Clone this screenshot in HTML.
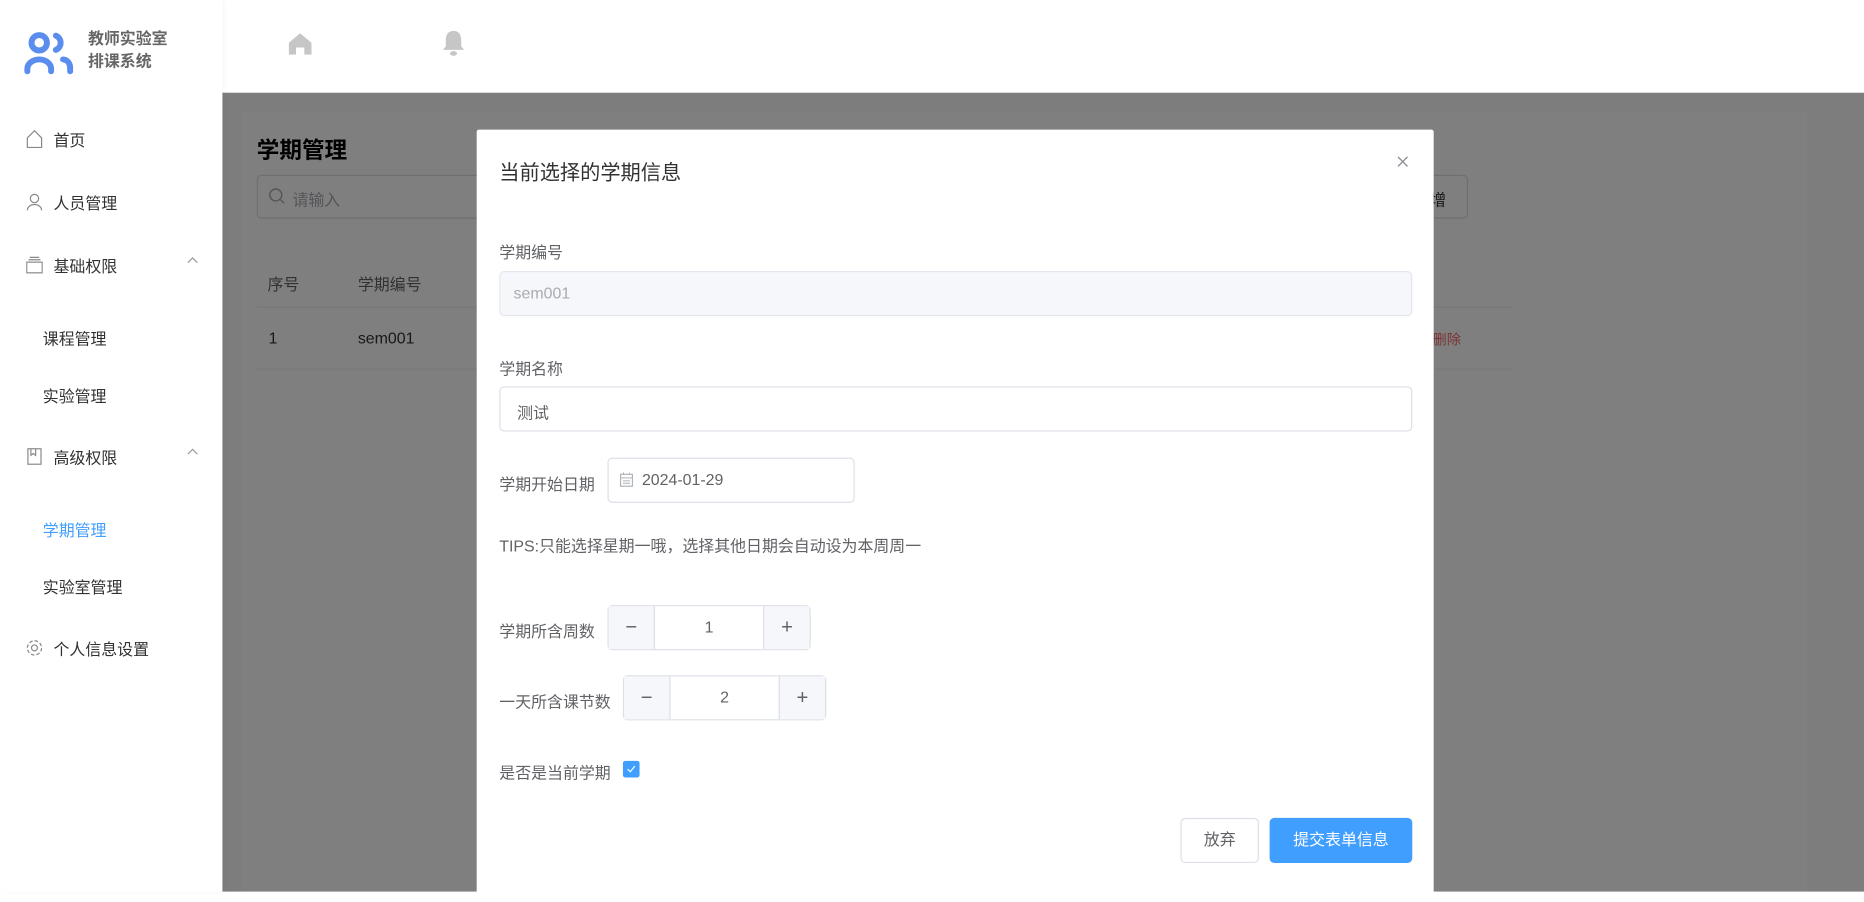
<!DOCTYPE html>
<html><head><meta charset="utf-8"><style>
html,body{margin:0;padding:0;width:1864px;height:891px;overflow:hidden;background:#fff}
#s{position:absolute;left:0;top:0;width:1568px;height:750px;transform:scale(1.18878);transform-origin:0 0;font-family:"Liberation Sans","Noto Sans CJK SC",sans-serif;font-size:13.4px;color:#303133}
.a{position:absolute}
.side{left:0;top:0;width:187px;height:750px;background:#fff;box-shadow:2px 0 6px rgba(0,0,0,.04)}
.mi{position:absolute;left:22px;font-size:13.4px;color:#303133;display:flex;align-items:center}
.mi svg{margin-right:9px}
.sub{position:absolute;left:36px;font-size:13.4px;color:#303133}
.inp{position:absolute;border:1px solid #dcdfe6;border-radius:4px;box-sizing:border-box;background:#fff}
.lbl{position:absolute;left:420px;font-size:13.4px;color:#606266}
.num{position:absolute;height:38px;width:171px;border:1px solid #dcdfe6;border-radius:4px;box-sizing:border-box;background:#fff}
.num .b{position:absolute;top:0;width:38px;height:36px;background:#f5f7fa;color:#606266;text-align:center;line-height:36px;font-size:17px;font-weight:300}
.num .v{position:absolute;left:38px;right:38px;top:0;height:36px;line-height:36px;text-align:center;color:#606266}
</style></head><body><div id="s">
<div class="a" style="left:187px;top:0;width:1381px;height:78px;background:#fff"></div>
<svg class="a" style="left:242px;top:27px" width="21" height="20" viewBox="0 0 21 20"><path d="M10.5 1 L20 9 L20 19 L14 19 L14 13 L7 13 L7 19 L1 19 L1 9 Z" fill="#c6c6c6"/></svg>
<svg class="a" style="left:371px;top:25px" width="21" height="23" viewBox="0 0 21 23"><path d="M10.5 1 C5.5 1 4 5 4 9 L4 14 L1.5 17 L19.5 17 L17 14 L17 9 C17 5 15.5 1 10.5 1Z" fill="#c6c6c6"/><ellipse cx="10.5" cy="20" rx="3" ry="2" fill="#c6c6c6"/></svg>
<div class="a" style="left:187px;top:78px;width:1381px;height:672px;background:#fbfbfb"></div>
<div class="a" style="left:203px;top:94px;width:1317px;height:656px;background:#fff"></div>
<div class="a" style="left:216px;top:112px;font-size:19px;font-weight:bold;color:#000">学期管理</div>
<div class="inp" style="left:216px;top:147px;width:300px;height:37px;"></div>
<svg class="a" style="left:226px;top:158px" width="14" height="14" viewBox="0 0 14 14"><circle cx="6" cy="6" r="5" fill="none" stroke="#a8abb2" stroke-width="1.2"/><path d="M10 10L13 13" stroke="#a8abb2" stroke-width="1.2"/></svg>
<div class="a" style="left:246px;top:157px;color:#a8abb2">请输入</div>
<div class="inp" style="left:1180px;top:147px;width:55px;height:37px"></div>
<div class="a" style="left:1203px;top:157px">增</div>
<div class="a" style="left:225px;top:228px;color:#606266">序号</div>
<div class="a" style="left:301px;top:228px;color:#606266">学期编号</div>
<div class="a" style="left:216px;top:258px;width:1056px;height:1px;background:#ebeef5"></div>
<div class="a" style="left:226px;top:277px">1</div>
<div class="a" style="left:301px;top:277px">sem001</div>
<div class="a" style="left:1205px;top:277px;color:#f56c6c;font-size:12px">删除</div>
<div class="a" style="left:216px;top:310px;width:1056px;height:1px;background:#ebeef5"></div>
<div class="a" style="left:187px;top:78px;width:1381px;height:672px;background:rgba(0,0,0,.5)"></div>
<div class="a side"></div>
<svg class="a" style="left:20px;top:26px" width="44" height="38" viewBox="0 0 44 38"><g fill="none" stroke="#5b8def" stroke-width="5" stroke-linecap="round"><circle cx="13" cy="10" r="6.5"/><path d="M27 4 A6.5 6.5 0 0 1 27 16"/><path d="M3 34 V32 A10 8 0 0 1 23 32 V34"/><path d="M33 24 A6 7 0 0 1 39 31 V34"/></g></svg>
<div class="a" style="left:74px;top:23px;font-size:13.4px;font-weight:bold;color:#666;line-height:19px">教师实验室<br>排课系统</div>
<div class="mi" style="top:107px"><svg width="14" height="16" viewBox="0 0 14 16"><path d="M1 7 L7 1 L13 7 L13 15 L1 15 Z" fill="none" stroke="#888" stroke-width="1"/></svg>首页</div>
<div class="mi" style="top:160px"><svg width="14" height="16" viewBox="0 0 14 16"><circle cx="7" cy="5" r="3.5" fill="none" stroke="#888"/><path d="M1 15 A6 5 0 0 1 13 15" fill="none" stroke="#888"/></svg>人员管理</div>
<div class="mi" style="top:213px"><svg width="14" height="16" viewBox="0 0 14 16"><rect x="0.5" y="5.5" width="13" height="9" fill="none" stroke="#888"/><path d="M2 3.5H12M3 1.5H11" stroke="#888"/></svg>基础权限</div>
<svg class="a" style="left:157px;top:216px" width="10" height="6" viewBox="0 0 10 6"><path d="M1 5 L5 1 L9 5" fill="none" stroke="#999"/></svg>
<div class="sub" style="top:274px">课程管理</div>
<div class="sub" style="top:322px">实验管理</div>
<div class="mi" style="top:374px"><svg width="14" height="16" viewBox="0 0 14 16"><rect x="1.5" y="1.5" width="11" height="13" fill="none" stroke="#888"/><path d="M4 1.5V7L6 5.5L8 7V1.5" fill="none" stroke="#888"/></svg>高级权限</div>
<svg class="a" style="left:157px;top:377px" width="10" height="6" viewBox="0 0 10 6"><path d="M1 5 L5 1 L9 5" fill="none" stroke="#999"/></svg>
<div class="sub" style="top:435px;color:#409eff">学期管理</div>
<div class="sub" style="top:483px">实验室管理</div>
<div class="mi" style="top:535px"><svg width="14" height="16" viewBox="0 0 14 16"><circle cx="7" cy="8" r="2.5" fill="none" stroke="#888"/><circle cx="7" cy="8" r="6" fill="none" stroke="#888" stroke-dasharray="3 1.7"/></svg>个人信息设置</div>
<div class="a" style="left:401px;top:109px;width:805px;height:650px;background:#fff;border-radius:2px"></div>
<div class="a" style="left:420px;top:131px;font-size:17px;color:#303133">当前选择的学期信息</div>
<svg class="a" style="left:1175px;top:131px" width="10" height="10" viewBox="0 0 10 10"><path d="M1 1L9 9M9 1L1 9" stroke="#909399" stroke-width="1.2"/></svg>
<div class="lbl" style="top:201px">学期编号</div>
<div class="inp" style="left:420px;top:228px;width:768px;height:38px;background:#f5f7fa;border-color:#e4e7ed"></div>
<div class="a" style="left:432px;top:239px;color:#a8abb2">sem001</div>
<div class="lbl" style="top:299px">学期名称</div>
<div class="inp" style="left:420px;top:325px;width:768px;height:38px"></div>
<div class="a" style="left:435px;top:336px;color:#606266">测试</div>
<div class="lbl" style="top:396px">学期开始日期</div>
<div class="inp" style="left:511px;top:385px;width:208px;height:38px"></div>
<svg class="a" style="left:521px;top:397px" width="12" height="13" viewBox="0 0 12 13"><rect x="1" y="2" width="10" height="10" fill="none" stroke="#b0b3b8"/><path d="M1 5H11M3 7.5H9M3 9.5H9M3.5 0.5V2.5M8.5 0.5V2.5" stroke="#b0b3b8" stroke-width=".8"/></svg>
<div class="a" style="left:540px;top:396px;color:#606266">2024-01-29</div>
<div class="lbl" style="top:448px">TIPS:只能选择星期一哦，选择其他日期会自动设为本周周一</div>
<div class="lbl" style="top:520px">学期所含周数</div>
<div class="num" style="left:511px;top:509px"><div class="b" style="left:0;border-right:1px solid #dcdfe6">−</div><div class="v">1</div><div class="b" style="right:0;border-left:1px solid #dcdfe6">+</div></div>
<div class="lbl" style="top:579px">一天所含课节数</div>
<div class="num" style="left:524px;top:568px"><div class="b" style="left:0;border-right:1px solid #dcdfe6">−</div><div class="v">2</div><div class="b" style="right:0;border-left:1px solid #dcdfe6">+</div></div>
<div class="lbl" style="top:639px">是否是当前学期</div>
<div class="a" style="left:524px;top:640px;width:14px;height:14px;background:#409eff;border-radius:2px"><svg width="14" height="14" viewBox="0 0 14 14"><path d="M4 7L6.2 9.2L10 4.5" fill="none" stroke="#fff" stroke-width="1"/></svg></div>
<div class="inp" style="left:993px;top:688px;width:66px;height:38px;text-align:center;line-height:36px;color:#606266">放弃</div>
<div class="a" style="left:1068px;top:688px;width:120px;height:38px;background:#409eff;border-radius:4px;color:#fff;text-align:center;line-height:38px">提交表单信息</div>
</div></body></html>
